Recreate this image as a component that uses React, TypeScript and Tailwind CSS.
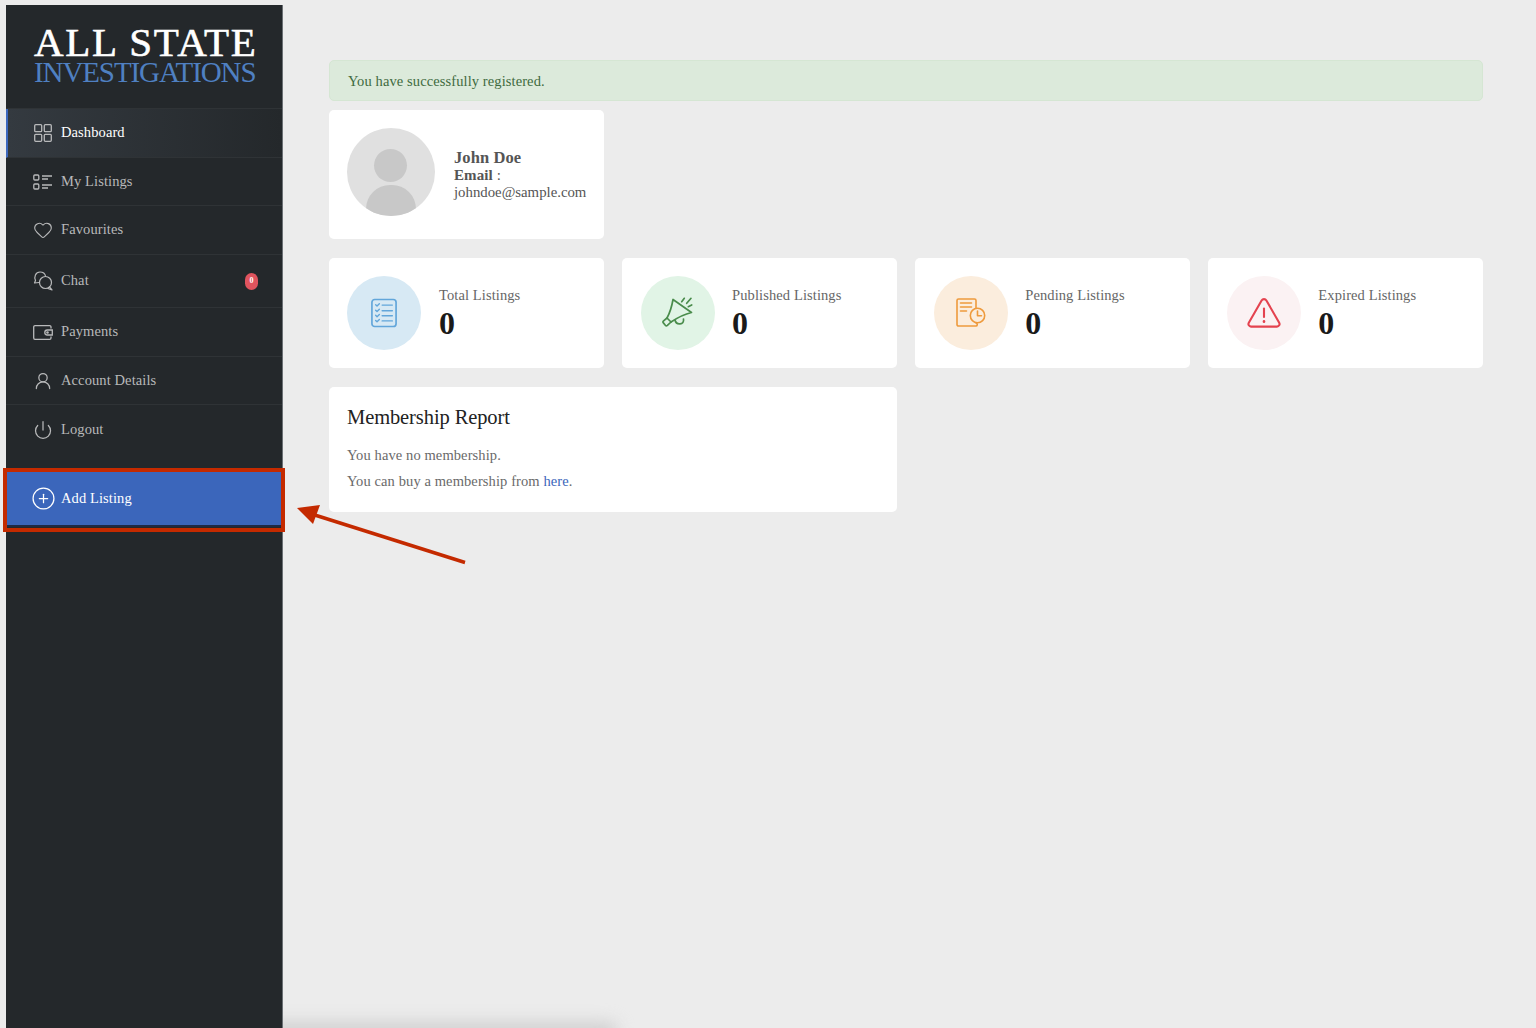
import type { ReactNode } from 'react';
import { CirclePlus, Heart, Power, UserRound } from 'lucide-react';

function DashboardIcon() {
  return (
    <svg width="18" height="18" viewBox="0 0 18 18" fill="none" stroke="currentColor" strokeWidth="1.300">
      <rect x="0.700" y="0.700" width="7" height="7" rx="1" />
      <rect x="10.300" y="0.700" width="7" height="7" rx="1" />
      <rect x="0.700" y="10.300" width="7" height="7" rx="1" />
      <rect x="10.300" y="10.300" width="7" height="7" rx="1" />
    </svg>
  );
}

function ListIcon() {
  return (
    <svg width="20" height="16" viewBox="0 0 20 16" fill="none" stroke="currentColor" strokeWidth="1.300">
      <rect x="0.800" y="1" width="5" height="5" rx="1" />
      <rect x="0.800" y="10" width="5" height="5" rx="1" />
      <path d="M9 2h10M9 5h6M9 11h10M9 14h6" />
    </svg>
  );
}

function ChatIcon() {
  return (
    <svg width="20" height="20" viewBox="0 0 20 20" fill="none" stroke="currentColor" strokeWidth="1.200" strokeLinejoin="round" strokeLinecap="round">
      <path d="M6 11.500 1.500 12l1-2.500C0.800 6 2.500 1 7 1c3 0 5 1.600 5.500 4" />
      <circle cx="12.500" cy="11.500" r="6" />
      <path d="M16.500 16l2.500 3-4-1.500" />
    </svg>
  );
}

function WalletIcon() {
  return (
    <svg width="20" height="15" viewBox="0 0 20 15" fill="none" stroke="currentColor" strokeWidth="1.300">
      <path d="M18 3.500V2a1.300 1.300 0 0 0-1.300-1.300H2A1.300 1.300 0 0 0 .7 2v11A1.300 1.300 0 0 0 2 14.300h14.700A1.300 1.300 0 0 0 18 13v-1.500" />
      <path d="M19.300 5h-5a2.500 2.500 0 0 0 0 5h5z" />
      <circle cx="14.500" cy="7.500" r="0.700" />
    </svg>
  );
}

function ChecklistIcon() {
  return (
    <svg width="26" height="30" viewBox="0 0 28 31" fill="none" stroke="#62a6da" strokeWidth="1.500" strokeLinecap="round" strokeLinejoin="round">
      <rect x="1" y="1" width="26" height="29" rx="3" strokeWidth="1.800" />
      <path d="M5 6.500l1.500 1.500 2.500-2.500M5 12.500l1.500 1.500 2.500-2.500M5 18l1.500 1.500L9 17M5 23.500l1.500 1.500 2.500-2.500" />
      <path d="M12 7h11M12 13h11M12 18.500h11M12 24h11" />
    </svg>
  );
}

function MegaphoneIcon() {
  return (
    <svg width="32" height="32" viewBox="0 0 32 32" fill="none" stroke="#4a8c4c" strokeWidth="1.700" strokeLinecap="round" strokeLinejoin="round">
      <path d="M11 2.500c-1 6-3 13-6 18.500l4 4c6-4 14-8 20.500-9.500z" />
      <path d="M5 21l-3.400 2.800a1.500 1.500 0 0 0-.2 2.100l1.900 2.300a1.500 1.500 0 0 0 2.100.2L9 25" />
      <path d="M13 23c.5 2.500 2.500 4 5 3.800 2.500-.2 4-1.800 3.500-4.800" />
      <path d="M19.700 4.700 22.300 1.300M24.700 6.300 29 1.300M26.300 9.700 29.700 8" />
    </svg>
  );
}

function PendingIcon() {
  return (
    <svg width="30" height="30" viewBox="0 0 30 30" fill="none" stroke="#ee9a3c" strokeWidth="1.600" strokeLinecap="round" strokeLinejoin="round">
      <path d="M20 10V2.500A1.500 1.500 0 0 0 18.500 1H2.500A1.500 1.500 0 0 0 1 2.500v24A1.500 1.500 0 0 0 2.500 28h17a1.500 1.500 0 0 0 .5-3" />
      <path d="M4.500 5h11M4.500 9h11M4.500 13h6" />
      <circle cx="21.500" cy="17.500" r="7.200" fill="#fbeddd" />
      <path d="M21.500 13v4.800h4" />
    </svg>
  );
}

function WarningIcon() {
  return (
    <svg width="34" height="30" viewBox="0 0 34 30" fill="none" stroke="#e4434f" strokeWidth="2.100" strokeLinecap="round" strokeLinejoin="round">
      <path d="M14.600 2.500a2.800 2.800 0 0 1 4.800 0l12.800 22.200a2.600 2.600 0 0 1-2.300 3.900H4.100a2.600 2.600 0 0 1-2.300-3.900z" />
      <path d="M17 10.500v8.500" />
      <path d="M17 23.300v.5" strokeWidth="2.600" />
    </svg>
  );
}

type NavItem = { label: string; icon: ReactNode; height: string; active?: boolean; badge?: boolean; lift?: boolean };

const navItems: NavItem[] = [
  { label: 'Dashboard', icon: <DashboardIcon />, height: 'h-[49px]', active: true, lift: true },
  { label: 'My Listings', icon: <ListIcon />, height: 'h-[48px]' },
  { label: 'Favourites', icon: <Heart size={20} strokeWidth={1.300} />, height: 'h-[49px]' },
  { label: 'Chat', icon: <ChatIcon />, height: 'h-[53px]', badge: true },
  { label: 'Payments', icon: <WalletIcon />, height: 'h-[49px]', lift: true },
  { label: 'Account Details', icon: <UserRound size={20} strokeWidth={1.500} />, height: 'h-[48px]' },
  { label: 'Logout', icon: <Power size={20} strokeWidth={1.500} />, height: 'h-[49px]' },
];

const stats = [
  { label: 'Total Listings', circle: 'bg-[#d7e9f4]', icon: <ChecklistIcon /> },
  { label: 'Published Listings', circle: 'bg-[#e1f4e6]', icon: <MegaphoneIcon /> },
  { label: 'Pending Listings', circle: 'bg-[#fbeddd]', icon: <PendingIcon /> },
  { label: 'Expired Listings', circle: 'bg-[#fbf2f3]', icon: <WarningIcon /> },
];

export default function App() {
  return (
    <div className="relative flex h-[1028px] overflow-hidden bg-[#ececec] pl-[6px] pt-[5px] font-['Liberation_Serif',serif] text-[14.500px] tracking-[0.100px]">
      {/* Sidebar */}
      <aside className="flex w-[277px] shrink-0 flex-col border-r border-[#6b7074] bg-[#24282b]">
        <div className="flex h-[103px] shrink-0 flex-col pl-[28px] pt-[19px]">
          <div className="text-[41px] leading-[36px] tracking-[1.700px] text-white [-webkit-text-stroke:0.600px_white]">ALL STATE</div>
          <div className="text-[29px] leading-[24px] tracking-[-1.100px] text-[#4f80c2]">INVESTIGATIONS</div>
        </div>
        <nav className="border-t border-[#2f3336]">
          {navItems.map(item => (
            <div
              key={item.label}
              className={`flex items-center border-b border-[#2f3336] ${item.height} ${
                item.active
                  ? 'border-l-2 border-l-[#3d68bd] bg-gradient-to-r from-[#343a40] to-[#24282b] pl-[25px] text-white'
                  : 'pl-[27px] text-[#b8b9ba]'
              } ${item.label === 'Logout' ? 'border-b-0' : ''}`}
            >
              <span className={`flex w-[20px] items-center justify-center ${item.active ? 'text-[#b8b9ba]' : ''}`}>{item.icon}</span>
              <span className={`ml-[8px] ${item.lift ? '-mt-[1px]' : ''}`}>{item.label}</span>
              {item.badge && (
                <span className="ml-auto mr-[24px] flex h-[17px] w-[13px] items-center justify-center rounded-full bg-[#e0545e] text-[8px] font-bold text-white">
                  0
                </span>
              )}
            </div>
          ))}
        </nav>
        <div className="mt-[18px] flex h-[55px] shrink-0 items-center gap-[8px] border-b-[2px] border-b-[#1f2a44] bg-[#3b66bb] pl-[27px] text-white">
          <span className="flex w-[20px] items-center justify-center">
            <CirclePlus size={25} strokeWidth={1.200} className="shrink-0" />
          </span>
          <span>Add Listing</span>
        </div>
      </aside>

      {/* Main content */}
      <main className="flex min-w-0 flex-1 flex-col pl-[46px] pr-[53px] pt-[55px]">
        <div className="flex h-[41px] items-center rounded-[5px] border border-[#d5e6d3] bg-[#dceadb] pl-[18px] text-[#3f6a40]">
          <span className="mt-[2px]">You have successfully registered.</span>
        </div>
        <div className="mt-[9px] grid grid-cols-4 gap-x-[18.500px] gap-y-[19px]">
          <div className="flex h-[129px] items-center rounded-[5px] bg-white pb-[6px] pl-[18px]">
            <div className="relative h-[88px] w-[88px] shrink-0 overflow-hidden rounded-full bg-[#e0e0e0]">
              <div className="absolute left-[27px] top-[21px] h-[33px] w-[33px] rounded-full bg-[#c8c8c8]" />
              <div className="absolute left-[19px] top-[57px] h-[48px] w-[50px] rounded-full bg-[#c8c8c8]" />
            </div>
            <div className="ml-[19px] mt-[5px] text-[#555]">
              <div className="text-[16.500px] font-bold leading-[19px]">John Doe</div>
              <div className="text-[15px] leading-[17px]"><b>Email</b> :</div>
              <div className="text-[14.800px] leading-[17px] tracking-[0px]">johndoe@sample.com</div>
            </div>
          </div>
          <div className="col-span-3" />
          {stats.map(stat => (
            <div key={stat.label} className="flex h-[110px] items-center rounded-[5px] bg-white pl-[18.400px]">
              <div className={`flex h-[74px] w-[74px] shrink-0 items-center justify-center rounded-full ${stat.circle}`}>{stat.icon}</div>
              <div className="ml-[17.600px] mt-[1px]">
                <div className="leading-[18px] text-[#666]">{stat.label}</div>
                <div className="mt-[1px] text-[32px] font-bold leading-[36px] text-[#1a1a1a]">0</div>
              </div>
            </div>
          ))}
          <div className="col-span-2 h-[125px] rounded-[5px] bg-white pl-[18px] pt-[16px]">
            <div className="text-[20.500px] leading-[28px] tracking-[-0.100px] text-[#222]">Membership Report</div>
            <div className="mt-[11px] leading-[26px] text-[#6a6a6a]">
              <div>You have no membership.</div>
              <div>
                You can buy a membership from <span className="text-[#3b66bb]">here</span>.
              </div>
            </div>
          </div>
        </div>
      </main>

      {/* Annotation over the screenshot */}
      <div className="absolute left-[3px] top-[468px] h-[64px] w-[282px] border-[4px] border-[#c42a00]" />
      <svg className="absolute left-[295px] top-[500px]" width="175" height="68" viewBox="0 0 175 68" fill="none">
        <path d="M15 13.500 170 62.500" stroke="#c42a00" strokeWidth="3.500" />
        <path d="M2 8 25 5 18 24z" fill="#c42a00" />
      </svg>
      <div className="absolute bottom-0 left-[283px] h-[30px] w-[360px] overflow-hidden">
        <div className="absolute bottom-[-14px] left-[-20px] h-[20px] w-[355px] rounded-r-full bg-[#d0d0d0] blur-[8px]" />
      </div>
    </div>
  );
}
